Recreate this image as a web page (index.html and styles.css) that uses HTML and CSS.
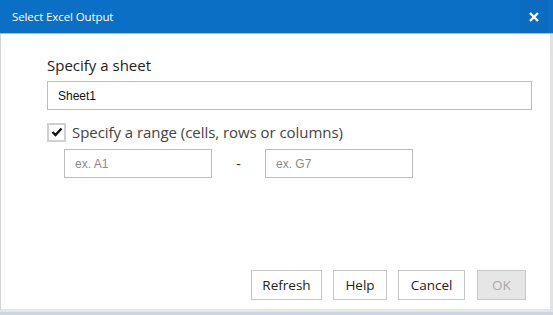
FILE: index.html
```html
<!DOCTYPE html>
<html lang="en">
<head>
    <meta charset="UTF-8">
    <title>Select Excel Output</title>
    <link rel="stylesheet" href="styles.css">
</head>
<body>
    <div class="dialog">
        <div class="titlebar">
            <span class="title">Select Excel Output</span>
            <button class="close-btn">
                <svg width="10" height="10" viewBox="0 0 10 10">
                    <path d="M1 1 L9 9 M9 1 L1 9" stroke="#fff" stroke-width="2.4" fill="none"/>
                </svg>
            </button>
        </div>

        <div class="content">
            <label class="field-label" for="sheet">Specify a sheet</label>
            <input type="text" id="sheet" class="text-input sheet-input" value="Sheet1">

            <div class="check-row">
                <span class="checkbox">
                    <svg width="12" height="10" viewBox="0 0 12 10">
                        <path d="M1.5 5 L4.5 8 L10.5 1.5" stroke="#111" stroke-width="2.4" fill="none"/>
                    </svg>
                </span>
                <span class="check-label">Specify a range (cells, rows or columns)</span>
            </div>

            <div class="range-row">
                <input type="text" class="text-input range-input" placeholder="ex. A1">
                <span class="dash">-</span>
                <input type="text" class="text-input range-input" placeholder="ex. G7">
            </div>
        </div>

        <div class="footer">
            <button class="btn btn-refresh">Refresh</button>
            <button class="btn btn-help">Help</button>
            <button class="btn btn-cancel">Cancel</button>
            <button class="btn btn-disabled">OK</button>
        </div>
    </div>
</body>
</html>
```

FILE: styles.css
```css
* {
    margin: 0;
    padding: 0;
    box-sizing: border-box;
}

body {
    width: 553px;
    height: 315px;
    background: #c9d6e4;
    font-family: 'Open Sans', 'Noto Sans', sans-serif;
}

.dialog {
    width: 553px;
    height: 312px;
    background: #fff;
    border-left: 1px solid #d4d4d4;
    border-right: 3px solid #e2e2e2;
    border-bottom: 3px solid #e6e6e6;
    display: flex;
    flex-direction: column;
}

.titlebar {
    height: 34px;
    margin: 0 -3px 0 -1px;
    background: #0b6fc6;
    border-bottom: 1px solid #b9b9b9;
    display: flex;
    align-items: center;
    justify-content: space-between;
    padding-left: 12px;
}

.title {
    color: #fff;
    font-size: 11.5px;
    letter-spacing: -0.1px;
}

.close-btn {
    width: 28px;
    height: 33px;
    margin-right: 5px;
    background: #0a6bc0;
    border: none;
    display: flex;
    align-items: center;
    justify-content: center;
}

.content {
    padding: 21px 21px 0 46px;
    display: flex;
    flex-direction: column;
}

.field-label {
    font-size: 15px;
    color: #222;
    line-height: 21px;
    margin-bottom: 5px;
}

.text-input {
    height: 29px;
    border: 1px solid #bdbdbd;
    font-family: 'Liberation Sans', Arial, sans-serif;
    font-size: 12px;
    color: #111;
    padding: 0 10px;
    outline: none;
}

.text-input::placeholder {
    color: #8a8a8a;
}

.sheet-input {
    width: 485px;
}

.check-row {
    display: flex;
    align-items: center;
    gap: 6px;
    margin-top: 12px;
}

.checkbox {
    width: 19px;
    height: 19px;
    border: 2px solid #d0d0d0;
    display: flex;
    align-items: center;
    justify-content: center;
}

.check-label {
    font-size: 15px;
    color: #444;
    line-height: 20px;
    letter-spacing: -0.05px;
}

.range-row {
    display: flex;
    align-items: center;
    margin-top: 7px;
    padding-left: 17px;
}

.range-input {
    width: 148px;
    height: 29px;
}

.dash {
    width: 53px;
    text-align: center;
    font-size: 14px;
    color: #333;
}

.footer {
    margin-top: auto;
    display: flex;
    justify-content: flex-end;
    gap: 11px;
    padding: 0 24px 9px 0;
}

.btn {
    height: 30px;
    background: #fff;
    border: 1px solid #c8c8c8;
    font-family: 'Open Sans', 'Noto Sans', sans-serif;
    font-size: 13.5px;
    color: #222;
}

.btn-refresh {
    width: 71px;
}

.btn-help {
    width: 54px;
}

.btn-cancel {
    width: 67px;
}

.btn-disabled {
    width: 49px;
    margin-left: 1px;
    background: #e6e6e6;
    color: #a9a9a9;
}
```
